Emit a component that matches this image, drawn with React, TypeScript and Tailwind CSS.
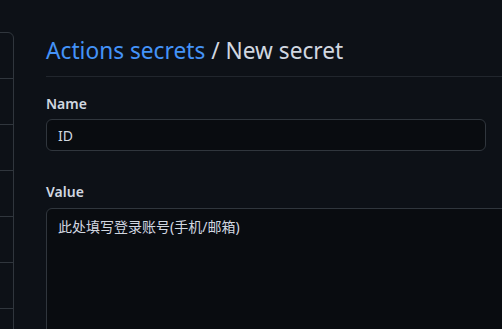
export default function App() {
  const rows = [0, 1, 2, 3, 4, 5, 6];
  return (
    <div
      className="w-[502px] h-[329px] overflow-hidden bg-[#0d1117] flex"
      style={{ fontFamily: '"Noto Sans", "Noto Sans CJK SC", sans-serif' }}
    >
      {/* sidebar */}
      <div className="w-[46px] shrink-0 pt-[32px] pr-[32px]">
        <div className="-ml-[20px] w-[34px] h-[400px] border border-[#30363d] rounded-tr-[6px] flex flex-col">
          {rows.map((r) => (
            <div key={r} className="h-[46px] shrink-0 border-b border-[#30363d]" />
          ))}
        </div>
      </div>

      {/* main */}
      <div className="flex-1 min-w-0 pt-[35px]">
        <h1 className="text-[22.7px] leading-[32px] font-normal pb-[9px] border-b border-[#21262d] whitespace-nowrap">
          <span className="text-[#4493f8]">Actions secrets</span>
          <span className="text-[#d1d7e0]"> / New secret</span>
        </h1>

        <div className="mt-[17px]">
          <label className="block text-[14px] leading-[20px] font-semibold text-[#d1d7e0]">Name</label>
          <div className="mt-[5px] w-[440px] h-[32px] rounded-[6px] border border-[#30363d] bg-[#090c10] flex items-center px-[11px] text-[14px] text-[#d1d7e0]">
            ID
          </div>
        </div>

        <div className="mt-[31px]">
          <label className="block text-[14px] leading-[20px] font-semibold text-[#d1d7e0]">Value</label>
          <div className="mt-[6px] w-[520px] h-[200px] rounded-[6px] border border-[#30363d] bg-[#090c10] px-[11px] py-[8px] text-[14px] leading-[20px] text-[#d1d7e0]">
            此处填写登录账号(手机/邮箱)
          </div>
        </div>
      </div>
    </div>
  );
}
